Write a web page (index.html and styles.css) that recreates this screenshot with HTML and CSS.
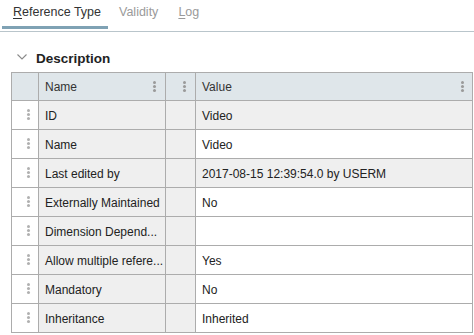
FILE: index.html
```html
<!DOCTYPE html>
<html lang="en">
<head>
    <meta charset="UTF-8">
    <title>Reference Type</title>
    <link rel="stylesheet" href="styles.css">
</head>
<body>

<div class="tabs">
    <div class="tab active"><u>R</u>eference Type</div>
    <div class="tab">Validity</div>
    <div class="tab"><u>L</u>og</div>
</div>

<div class="section-title">
    <svg class="chevron" width="10" height="6" viewBox="0 0 10 6"><path d="M0.5 0.5 L5 5 L9.5 0.5" fill="none" stroke="#8a8a8a" stroke-width="1.1"/></svg>
    <span>Description</span>
</div>

<table class="grid">
    <colgroup>
        <col class="c-drag">
        <col class="c-name">
        <col class="c-empty">
        <col class="c-value">
    </colgroup>
    <thead>
        <tr>
            <th></th>
            <th><span>Name</span><i class="dots"></i></th>
            <th><i class="dots"></i></th>
            <th><span>Value</span><i class="dots"></i></th>
        </tr>
    </thead>
    <tbody>
        <tr><td class="drag"><i class="dots"></i></td><td class="ro">ID</td><td class="ro"></td><td class="ro">Video</td></tr>
        <tr><td class="drag"><i class="dots"></i></td><td class="ro">Name</td><td class="ro"></td><td>Video</td></tr>
        <tr><td class="drag"><i class="dots"></i></td><td class="ro">Last edited by</td><td class="ro"></td><td class="ro">2017-08-15 12:39:54.0 by USERM</td></tr>
        <tr><td class="drag"><i class="dots"></i></td><td class="ro">Externally Maintained</td><td class="ro"></td><td>No</td></tr>
        <tr><td class="drag"><i class="dots"></i></td><td class="ro">Dimension Depend...</td><td class="ro"></td><td></td></tr>
        <tr><td class="drag"><i class="dots"></i></td><td class="ro">Allow multiple refere...</td><td class="ro"></td><td>Yes</td></tr>
        <tr><td class="drag"><i class="dots"></i></td><td class="ro">Mandatory</td><td class="ro"></td><td>No</td></tr>
        <tr><td class="drag"><i class="dots"></i></td><td class="ro">Inheritance</td><td class="ro"></td><td>Inherited</td></tr>
    </tbody>
</table>

</body>
</html>
```

FILE: styles.css
```css
body {
    margin: 0;
    background: #fff;
    font-family: 'Liberation Sans', Arial, sans-serif;
    font-size: 12px;
    color: #222;
    width: 474px;
    height: 335px;
    overflow: hidden;
}

/* tab strip */
.tabs {
    display: flex;
    height: 31px;
    border-bottom: 1px solid #b9c5cb;
    padding-left: 2px;
}
.tab {
    font-size: 12.5px;
    color: #9a9a9a;
    padding: 5px 10px 0 10px;
    white-space: nowrap;
}
.tab u {
    text-decoration-thickness: 1px;
    text-underline-offset: 2px;
}
.tab.active {
    color: #333;
    padding-left: 11px;
    width: 106px;
    box-sizing: border-box;
    border-bottom: 3px solid #7fa2b4;
    height: 29px;
}
.tab.active + .tab {
    padding-left: 11px;
}

/* section header */
.section-title {
    display: flex;
    align-items: center;
    height: 22px;
    margin-top: 15px;
    padding-left: 17px;
    font-weight: bold;
    font-size: 13.5px;
    color: #222;
}
.chevron {
    margin-right: 9px;
    margin-top: -2px;
}

/* property grid */
.grid {
    border-collapse: collapse;
    margin: 3px 0 0 11px;
    width: 462px;
    table-layout: fixed;
}
.c-drag { width: 27px; }
.c-name { width: 127px; }
.c-empty { width: 30px; }
.grid th,
.grid td {
    border: 1px solid #acacac;
    height: 27px;
    padding: 1px 0 0 6px;
    text-align: left;
    white-space: nowrap;
    overflow: hidden;
    font-weight: normal;
    position: relative;
}
.grid thead th {
    background: #dfe6ea;
    height: 26px;
    color: #333;
}
.grid td.ro {
    background: #efefef;
}
.grid td.drag {
    background: #fff;
}

/* three-dot handles */
.dots {
    position: absolute;
    top: 50%;
    width: 3px;
    height: 3px;
    margin-top: -6px;
    border-radius: 50%;
    background: #9a9a9a;
    box-shadow: 0 4px 0 #9a9a9a, 0 8px 0 #9a9a9a;
}
th .dots { right: 9px; }
.grid thead th:nth-child(4) .dots { right: 8px; }
td.drag .dots {
    left: 15px;
    background: #b0b0b0;
    box-shadow: 0 4px 0 #b0b0b0, 0 8px 0 #b0b0b0;
}
```
